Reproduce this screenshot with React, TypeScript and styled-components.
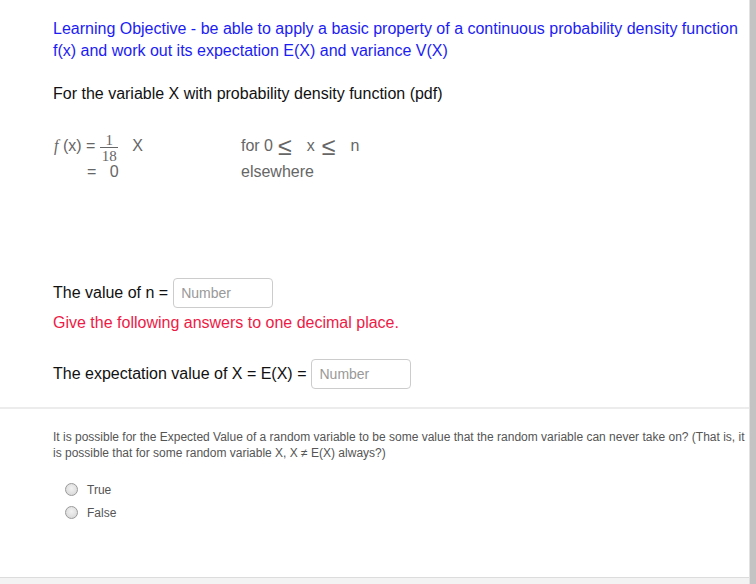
import styled, { createGlobalStyle } from "styled-components";

const GlobalStyle = createGlobalStyle`
  html, body {
    margin: 0;
    padding: 0;
    background: #ffffff;
    font-family: "Liberation Sans", Arial, sans-serif;
  }
`;

const Frame = styled.div`
  display: flex;
  height: 584px;
  overflow: hidden;
`;

const Panel = styled.div`
  width: 749px;
  border-right: 1px solid #e2e2e2;
  display: flex;
  flex-direction: column;
`;

const ScrollTrack = styled.div`
  flex: 1;
  background: #c3c3c3;
`;

const Body = styled.div`
  flex: 1;
`;

const Section = styled.section`
  padding: 18px 8px 0 53px;
`;

const Para = styled.p<{ $color?: string; $top?: number }>`
  margin: ${(p) => p.$top ?? 0}px 0 0;
  font-size: 16px;
  line-height: 22px;
  color: ${(p) => p.$color ?? "#111"};
`;

const Formula = styled.div`
  margin-top: 28px;
  display: grid;
  grid-template-columns: 188px auto;
  grid-auto-rows: 26px;
  color: #666;
  font-size: 16px;
`;

const Cell = styled.div`
  display: flex;
  align-items: center;
  white-space: pre;
`;

const Fn = styled.span`
  font-family: "Liberation Serif", serif;
  font-style: italic;
  margin-left: 1px;
`;

const Eq = styled.span<{ $left: number }>`
  margin-left: ${(p) => p.$left}px;
`;

const Frac = styled.span`
  display: inline-flex;
  flex-direction: column;
  align-items: center;
  margin: 0 14px 0 5px;
  font-family: "Liberation Serif", serif;
  font-size: 15px;
  line-height: 12px;
  transform: translateY(2px);
`;

const Num = styled.span`
  padding: 0 1px 1px;
  border-bottom: 1px solid #666;
  min-width: 16px;
  text-align: center;
`;

const Den = styled.span`
  padding-top: 2px;
`;

const Leq = styled.span<{ $before: number }>`
  display: inline-block;
  font-size: 25px;
  line-height: 22px;
  margin: 0 15px 0 ${(p) => p.$before}px;
`;

const Row = styled.div<{ $top: number }>`
  display: flex;
  align-items: center;
  height: 30px;
  margin-top: ${(p) => p.$top}px;
  font-size: 16px;
  color: #111;
`;

const NumberInput = styled.input`
  box-sizing: border-box;
  width: 100px;
  height: 30px;
  margin-left: 5px;
  padding: 0 7px;
  border: 1px solid #cccccc;
  border-radius: 4px;
  font-family: "Liberation Sans", Arial, sans-serif;
  font-size: 14px;
  color: #333;
  outline: none;

  &::placeholder {
    color: #999;
  }
`;

const Divider = styled.hr`
  margin: 18px 0 0;
  border: 0;
  height: 2px;
  background: #ececec;
`;

const Question = styled.section`
  padding: 20px 0 0 53px;
`;

const Prompt = styled.p`
  margin: 0;
  font-size: 12px;
  line-height: 16px;
  color: #555;
`;

const Options = styled.div`
  margin-top: 17px;
  padding-left: 12px;
`;

const Option = styled.label`
  display: flex;
  align-items: center;
  height: 23px;
  gap: 9px;
  font-size: 12px;
  color: #555;
`;

const Radio = styled.span`
  width: 11px;
  height: 11px;
  border-radius: 50%;
  border: 1px solid #9a9a9a;
  background: radial-gradient(circle at 50% 40%, #f2f2f2 0%, #dcdcdc 70%, #cfcfcf 100%);
`;

const Footer = styled.div`
  height: 6px;
  border-top: 1px solid #dcdcdc;
  background: #f3f3f3;
`;

export default function App() {
  return (
    <>
      <GlobalStyle />
      <Frame>
        <Panel>
          <Body>
            <Section>
              <Para $color="#1c1cf5">
                Learning Objective - be able to apply a basic property of a continuous probability density function
                f(x) and work out its expectation E(X) and variance V(X)
              </Para>
              <Para $top={21}>For the variable X with probability density function (pdf)</Para>

              <Formula>
                <Cell>
                  <Fn>f</Fn>
                  {" (x) ="}
                  <Frac>
                    <Num>1</Num>
                    <Den>18</Den>
                  </Frac>
                  X
                </Cell>
                <Cell>
                  {"for 0"}
                  <Leq $before={5}>≤</Leq>
                  x
                  <Leq $before={7}>≤</Leq>
                  n
                </Cell>
                <Cell>
                  <Eq $left={34}>=</Eq>
                  {"   0"}
                </Cell>
                <Cell>elsewhere</Cell>
              </Formula>

              <Row $top={93}>
                The value of n =
                <NumberInput placeholder="Number" />
              </Row>
              <Para $color="#ee1a46" $top={4}>Give the following answers to one decimal place.</Para>
              <Row $top={25}>
                The expectation value of X = E(X) =
                <NumberInput placeholder="Number" />
              </Row>
            </Section>

            <Divider />

            <Question>
              <Prompt>
                It is possible for the Expected Value of a random variable to be some value that the random variable can
                never take on? (That is, it is possible that for some random variable X, X ≠ E(X) always?)
              </Prompt>
              <Options>
                <Option>
                  <Radio />
                  True
                </Option>
                <Option>
                  <Radio />
                  False
                </Option>
              </Options>
            </Question>
          </Body>
          <Footer />
        </Panel>
        <ScrollTrack />
      </Frame>
    </>
  );
}
